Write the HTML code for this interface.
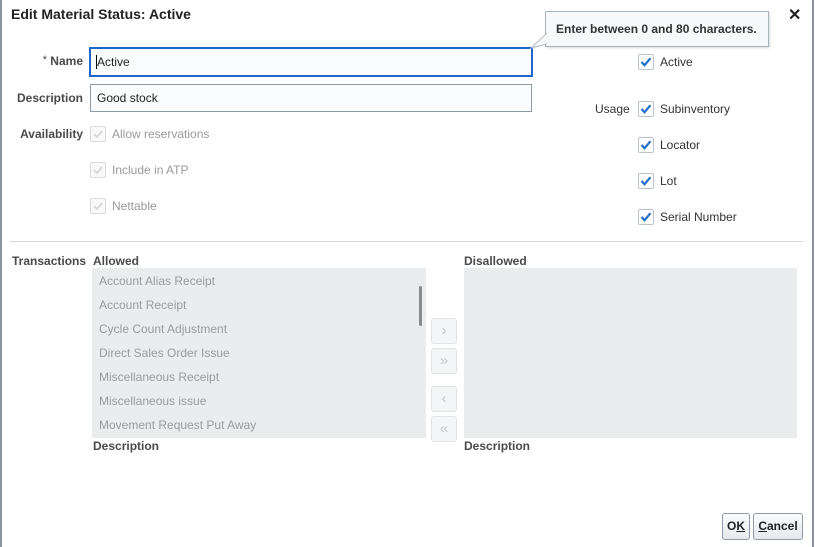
<!DOCTYPE html>
<html><head><style>
*{box-sizing:border-box}
body{margin:0;width:815px;height:547px;background:#fff;font-family:"Liberation Sans",Arial,sans-serif;font-size:12px;color:#333;position:relative;overflow:hidden}
.a{position:absolute}
.lbl{position:absolute;font-weight:bold;color:#4a4a4a;text-align:right}
.inp{position:absolute;border:1px solid #8e9aa8;background:#fbfcfd;padding-left:6px;font-size:12px;color:#222}
.cb{position:absolute;width:16px;height:16px;border:1px solid #bcc3cc;border-radius:2px;background:#fff}
.cb svg{position:absolute;left:1px;top:1px}
.dis{border-color:#d8dadd;background:#f9f9f9}
.t{position:absolute;font-size:12px}
.g{color:#9a9a9a}
.list{position:absolute;background:#ebecee}
.li{position:absolute;left:7px;color:#9b9b9b;font-size:12px}
.sb{position:absolute;width:26px;height:26px;border:1px solid #e0e2e5;border-radius:3px;background:#f4f5f6;color:#c3c6ca;text-align:center;line-height:24px;font-size:15px}
.btn{position:absolute;border:1px solid #8e9aa8;border-radius:3px;background:linear-gradient(#fafbfc,#e6e9ed);font-weight:bold;font-size:12px;color:#222;text-align:center;line-height:25px;height:27px}
</style></head><body>
<div class="a" style="left:0;top:0;width:2px;height:547px;background:#8a929b"></div>
<div class="a" style="left:812px;top:0;width:2px;height:547px;background:#8a929b"></div>
<div class="a" style="left:11px;top:6px;font-size:14px;font-weight:bold;color:#222">Edit Material Status: Active</div>
<div class="a" style="left:788px;top:5px;font-size:16px;font-weight:bold;color:#222">✕</div>

<div class="lbl" style="right:732px;top:54px"><span style="font-weight:normal;font-size:11px;vertical-align:top">*</span> Name</div>
<div class="inp" style="left:89px;top:47px;width:444px;height:30px;border:2px solid #1e66c9;line-height:26px;padding-left:5px"><span style="border-left:1px solid #000">Active</span></div>
<div class="lbl" style="right:732px;top:91px">Description</div>
<div class="inp" style="left:90px;top:84px;width:442px;height:28px;line-height:26px">Good stock</div>
<div class="lbl" style="right:732px;top:127px">Availability</div>

<div class="cb dis" style="left:90px;top:126px"><svg width="12" height="12"><path d="M2 6l3 3 5-6" stroke="#d5d7da" stroke-width="1.8" fill="none"/></svg></div>
<div class="t g" style="left:112px;top:127px">Allow reservations</div>
<div class="cb dis" style="left:90px;top:162px"><svg width="12" height="12"><path d="M2 6l3 3 5-6" stroke="#d5d7da" stroke-width="1.8" fill="none"/></svg></div>
<div class="t g" style="left:112px;top:163px">Include in ATP</div>
<div class="cb dis" style="left:90px;top:198px"><svg width="12" height="12"><path d="M2 6l3 3 5-6" stroke="#d5d7da" stroke-width="1.8" fill="none"/></svg></div>
<div class="t g" style="left:112px;top:199px">Nettable</div>

<div class="cb" style="left:638px;top:54px"><svg width="12" height="12"><path d="M1.5 6l3 3.2 6-7" stroke="#1e6fc9" stroke-width="2.2" fill="none"/></svg></div>
<div class="t" style="left:660px;top:55px">Active</div>
<div class="lbl" style="left:595px;top:102px;font-weight:normal;color:#333">Usage</div>
<div class="cb" style="left:638px;top:101px"><svg width="12" height="12"><path d="M1.5 6l3 3.2 6-7" stroke="#1e6fc9" stroke-width="2.2" fill="none"/></svg></div>
<div class="t" style="left:660px;top:102px">Subinventory</div>
<div class="cb" style="left:638px;top:137px"><svg width="12" height="12"><path d="M1.5 6l3 3.2 6-7" stroke="#1e6fc9" stroke-width="2.2" fill="none"/></svg></div>
<div class="t" style="left:660px;top:138px">Locator</div>
<div class="cb" style="left:638px;top:173px"><svg width="12" height="12"><path d="M1.5 6l3 3.2 6-7" stroke="#1e6fc9" stroke-width="2.2" fill="none"/></svg></div>
<div class="t" style="left:660px;top:174px">Lot</div>
<div class="cb" style="left:638px;top:209px"><svg width="12" height="12"><path d="M1.5 6l3 3.2 6-7" stroke="#1e6fc9" stroke-width="2.2" fill="none"/></svg></div>
<div class="t" style="left:660px;top:210px">Serial Number</div>

<!-- tooltip -->
<div class="a" style="left:545px;top:11px;width:224px;height:36px;border:1px solid #a9b2bc;background:#f8f9fa;box-shadow:1px 1px 2px rgba(0,0,0,.15);font-weight:bold;font-size:12px;color:#333;line-height:34px;padding-left:10px">Enter between 0 and 80 characters.</div>
<svg class="a" style="left:528px;top:32px" width="20" height="18"><path d="M19 1 L3 16 L19 12" fill="#f8f9fa" stroke="#b5bcc4"/></svg>

<div class="a" style="left:10px;top:241px;width:793px;height:1px;background:#d6d9dd"></div>

<div class="lbl" style="left:12px;top:254px">Transactions</div>
<div class="lbl" style="left:93px;top:254px;text-align:left">Allowed</div>
<div class="lbl" style="left:464px;top:254px;text-align:left">Disallowed</div>
<div class="list" style="left:92px;top:268px;width:334px;height:170px">
<div class="li" style="top:6px">Account Alias Receipt</div>
<div class="li" style="top:30px">Account Receipt</div>
<div class="li" style="top:54px">Cycle Count Adjustment</div>
<div class="li" style="top:78px">Direct Sales Order Issue</div>
<div class="li" style="top:102px">Miscellaneous Receipt</div>
<div class="li" style="top:126px">Miscellaneous issue</div>
<div class="li" style="top:150px">Movement Request Put Away</div>
<div class="a" style="left:327px;top:18px;width:3px;height:40px;background:#8a8a8a;border-radius:2px"></div>
</div>
<div class="list" style="left:464px;top:268px;width:333px;height:170px"></div>
<div class="sb" style="left:431px;top:318px">›</div>
<div class="sb" style="left:431px;top:348px">»</div>
<div class="sb" style="left:431px;top:386px">‹</div>
<div class="sb" style="left:431px;top:416px">«</div>
<div class="lbl" style="left:93px;top:439px;text-align:left">Description</div>
<div class="lbl" style="left:464px;top:439px;text-align:left">Description</div>

<div class="btn" style="left:722px;top:513px;width:28px">O<u>K</u></div>
<div class="btn" style="left:753px;top:513px;width:50px"><u>C</u>ancel</div>
</body></html>
